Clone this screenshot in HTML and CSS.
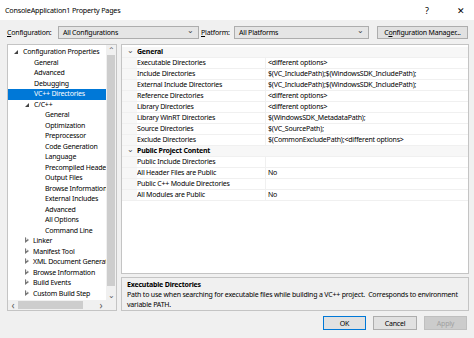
FILE: index.html
```html
<!DOCTYPE html>
<html lang="en">
<head>
  <meta charset="UTF-8">
  <title>ConsoleApplication1 Property Pages</title>
  <link rel="stylesheet" href="styles.css">
</head>
<body>

<div class="dialog">
  <div class="titlebar">
    <span class="title">ConsoleApplication1 Property Pages</span>
    <span class="help">?</span>
    <span class="close">&#x2715;</span>
  </div>

  <div class="toolbar">
    <span class="label"><u>C</u>onfiguration:</span>
    <div class="combo config-combo"><span>All Configurations</span><span class="chev">&#x2304;</span></div>
    <span class="label"><u>P</u>latform:</span>
    <div class="combo platform-combo"><span>All Platforms</span><span class="chev">&#x2304;</span></div>
    <div class="btn manager">C<u>o</u>nfiguration Manager...</div>
  </div>

  <div class="main">
    <div class="tree">
      <div class="tree-items">
        <div class="node l0"><span class="tri open"></span>Configuration Properties</div>
        <div class="node l1">General</div>
        <div class="node l1">Advanced</div>
        <div class="node l1">Debugging</div>
        <div class="node l1 selected">VC++ Directories</div>
        <div class="node l1b"><span class="tri open"></span>C/C++</div>
        <div class="node l2">General</div>
        <div class="node l2">Optimization</div>
        <div class="node l2">Preprocessor</div>
        <div class="node l2">Code Generation</div>
        <div class="node l2">Language</div>
        <div class="node l2">Precompiled Headers</div>
        <div class="node l2">Output Files</div>
        <div class="node l2">Browse Information</div>
        <div class="node l2">External Includes</div>
        <div class="node l2">Advanced</div>
        <div class="node l2">All Options</div>
        <div class="node l2">Command Line</div>
        <div class="node l1b"><span class="tri closed"></span>Linker</div>
        <div class="node l1b"><span class="tri closed"></span>Manifest Tool</div>
        <div class="node l1b"><span class="tri closed"></span>XML Document Generator</div>
        <div class="node l1b"><span class="tri closed"></span>Browse Information</div>
        <div class="node l1b"><span class="tri closed"></span>Build Events</div>
        <div class="node l1b"><span class="tri closed"></span>Custom Build Step</div>
        <div class="node l1b"><span class="tri closed"></span>Code Analysis</div>
      </div>
      <div class="vscroll">
        <span class="arrow">&#x2303;</span>
        <div class="vthumb"></div>
        <span class="arrow">&#x2304;</span>
      </div>
      <div class="hscroll">
        <span class="arrow">&lsaquo;</span>
        <div class="htrack"><div class="hthumb"></div></div>
        <span class="arrow">&rsaquo;</span>
      </div>
      <div class="corner"></div>
    </div>

    <div class="right">
      <div class="grid">
        <div class="row cat"><span class="gut"><span class="catchev">&#x2304;</span></span><span class="name">General</span></div>
        <div class="row"><span class="gut"></span><span class="name">Executable Directories</span><span class="val">&lt;different options&gt;</span></div>
        <div class="row"><span class="gut"></span><span class="name">Include Directories</span><span class="val">$(VC_IncludePath);$(WindowsSDK_IncludePath);</span></div>
        <div class="row"><span class="gut"></span><span class="name">External Include Directories</span><span class="val">$(VC_IncludePath);$(WindowsSDK_IncludePath);</span></div>
        <div class="row"><span class="gut"></span><span class="name">Reference Directories</span><span class="val">&lt;different options&gt;</span></div>
        <div class="row"><span class="gut"></span><span class="name">Library Directories</span><span class="val">&lt;different options&gt;</span></div>
        <div class="row"><span class="gut"></span><span class="name">Library WinRT Directories</span><span class="val">$(WindowsSDK_MetadataPath);</span></div>
        <div class="row"><span class="gut"></span><span class="name">Source Directories</span><span class="val">$(VC_SourcePath);</span></div>
        <div class="row"><span class="gut"></span><span class="name">Exclude Directories</span><span class="val">$(CommonExcludePath);&lt;different options&gt;</span></div>
        <div class="row cat"><span class="gut"><span class="catchev">&#x2304;</span></span><span class="name">Public Project Content</span></div>
        <div class="row"><span class="gut"></span><span class="name">Public Include Directories</span><span class="val"></span></div>
        <div class="row"><span class="gut"></span><span class="name">All Header Files are Public</span><span class="val">No</span></div>
        <div class="row"><span class="gut"></span><span class="name">Public C++ Module Directories</span><span class="val"></span></div>
        <div class="row"><span class="gut"></span><span class="name">All Modules are Public</span><span class="val">No</span></div>
      </div>
      <div class="desc">
        <div class="desc-title">Executable Directories</div>
        <div class="desc-text">Path to use when searching for executable files while building a VC++ project.&nbsp; Corresponds to environment variable PATH.</div>
      </div>
    </div>
  </div>

  <div class="buttons">
    <div class="btn ok">OK</div>
    <div class="btn cancel">Cancel</div>
    <div class="btn disabled">Apply</div>
  </div>
</div>

</body>
</html>
```

FILE: styles.css
```css
body {
  margin: 0;
  font-family: "Noto Sans", "Open Sans", sans-serif;
  font-size: 7px;
  letter-spacing: -0.2px;
  color: #000;
}
.dialog {
  width: 474px;
  height: 338px;
  background-color: #f0f0f0;
  position: relative;
}
.titlebar {
  height: 20px;
  background-color: #fff;
  display: flex;
  align-items: center;
  padding-left: 5px;
  font-size: 7.2px;
}
.title {
  flex: 1;
}
.help {
  width: 12px;
  margin-right: 20px;
  font-size: 9px;
}
.close {
  width: 10px;
  margin-right: 7px;
  font-size: 9px;
}
.toolbar {
  height: 24px;
  display: flex;
  align-items: center;
  padding-left: 7px;
}
.label {
  width: 51px;
}
.combo {
  height: 13px;
  box-sizing: border-box;
  border: 1px solid #adadad;
  background-color: #e5e5e5;
  display: flex;
  align-items: center;
  justify-content: space-between;
  padding: 0 4px;
  margin-right: 2px;
}
.config-combo {
  width: 141px;
}
.platform-combo {
  width: 135px;
  margin-right: 8px;
}
.toolbar .label:nth-of-type(2) {
  width: 33px;
}
.chev {
  font-size: 8px;
  line-height: 6px;
  color: #444;
  margin-top: -4px;
}
.btn {
  height: 14px;
  box-sizing: border-box;
  border: 1px solid #adadad;
  background-color: #e1e1e1;
  display: flex;
  align-items: center;
  justify-content: center;
}
.manager {
  width: 91px;
  height: 13px;
}
.main {
  display: flex;
  padding-left: 7px;
  height: 267px;
}
.tree {
  width: 110px;
  box-sizing: border-box;
  border: 1px solid #c4c4c4;
  background-color: #fff;
  display: grid;
  grid-template-columns: 1fr 10px;
  grid-template-rows: 1fr 10px;
  overflow: hidden;
}
.tree-items {
  padding-top: 2px;
  overflow: hidden;
  white-space: nowrap;
}
.node {
  height: 10.5px;
  line-height: 10.5px;
  position: relative;
}
.l0 { padding-left: 15px; }
.l1 { padding-left: 26px; }
.l1b { padding-left: 26px; }
.l2 { padding-left: 37px; }
.selected {
  background-color: #0078d7;
  color: #fff;
}
.tri {
  display: inline-block;
  width: 5px;
  margin-left: -9px;
  margin-right: 4px;
  height: 5px;
}
.tri.open {
  width: 0;
  height: 0;
  border-left: 4px solid transparent;
  border-bottom: 4px solid #444;
  margin-right: 5px;
}
.tri.closed {
  width: 0;
  height: 0;
  border-top: 3px solid transparent;
  border-bottom: 3px solid transparent;
  border-left: 4px solid #777;
  position: relative;
}
.tri.closed::after {
  content: "";
  position: absolute;
  left: -3.2px;
  top: -1.6px;
  border-top: 1.6px solid transparent;
  border-bottom: 1.6px solid transparent;
  border-left: 2.2px solid #fff;
}
.vscroll {
  background-color: #f0f0f0;
  display: flex;
  flex-direction: column;
  align-items: center;
}
.arrow {
  height: 10px;
  line-height: 10px;
  font-size: 8px;
  color: #606060;
  text-align: center;
}
.vthumb {
  flex: 1;
  width: 8px;
  margin: 0 0 4px;
  background-color: #cdcdcd;
}
.hscroll {
  background-color: #f0f0f0;
  display: flex;
  align-items: center;
}
.hscroll .arrow {
  width: 10px;
  font-size: 10px;
}
.htrack {
  flex: 1;
  height: 8px;
}
.hthumb {
  width: 65px;
  height: 8px;
  background-color: #cdcdcd;
}
.corner {
  background-color: #f0f0f0;
}
.right {
  margin-left: 4px;
  width: 348px;
  display: flex;
  flex-direction: column;
  gap: 3px;
}
.grid {
  height: 231px;
  box-sizing: border-box;
  border: 1px solid #c4c4c4;
  background-color: #fff;
  padding-top: 2px;
}
.row {
  display: flex;
  height: 11px;
  line-height: 10px;
  box-sizing: border-box;
  border-bottom: 1px solid #f0f0f0;
  white-space: nowrap;
}
.gut {
  width: 15px;
  background-color: #f7f7f7;
  position: relative;
}
.catchev {
  position: absolute;
  left: 5px;
  top: -2px;
  font-size: 8px;
  color: #555;
}
.name {
  width: 128px;
  border-right: 1px solid #f0f0f0;
}
.val {
  padding-left: 2px;
}
.cat {
  background-color: #f7f7f7;
}
.cat .name {
  font-weight: bold;
  border-right: none;
}
.desc {
  flex: 1;
  box-sizing: border-box;
  border: 1px solid #c4c4c4;
  padding: 2px 5px 0;
  line-height: 10px;
}
.desc-title {
  font-weight: bold;
}
.buttons {
  display: flex;
  justify-content: flex-end;
  gap: 7px;
  padding: 5px 7px 0 0;
}
.buttons .btn {
  width: 43px;
}
.buttons .btn.cancel {
  width: 44px;
}
.btn.ok {
  border-color: #0078d7;
}
.btn.disabled {
  background-color: #cccccc;
  border-color: #bfbfbf;
  color: #a0a0a0;
}
```
